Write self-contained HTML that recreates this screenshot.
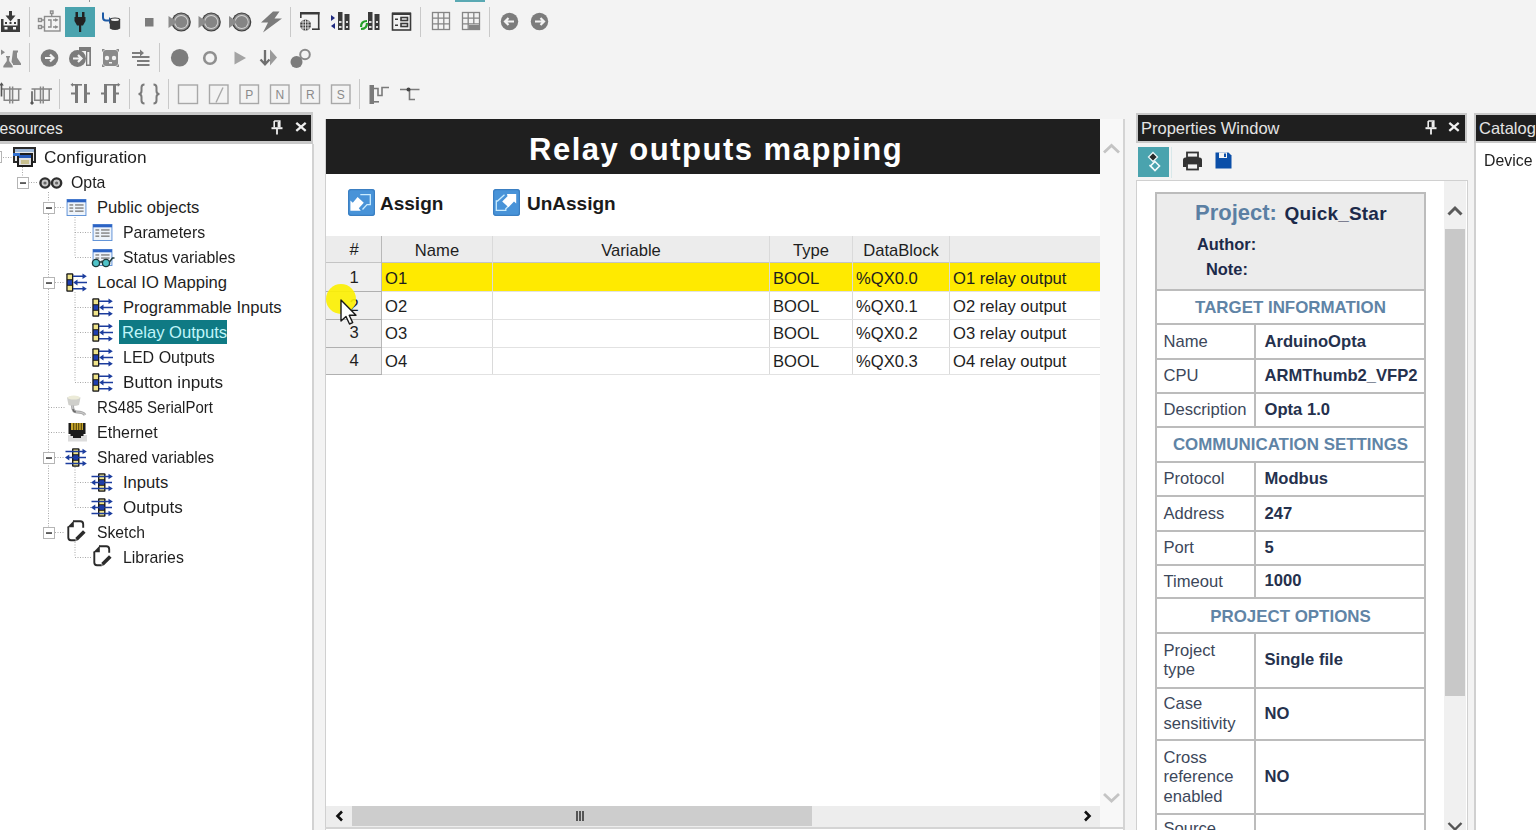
<!DOCTYPE html>
<html><head><meta charset="utf-8">
<style>
*{margin:0;padding:0;box-sizing:border-box}
html,body{width:1536px;height:830px;overflow:hidden;background:#f3f3f3;font-family:"Liberation Sans",sans-serif;color:#1e1e1e;position:relative}
.a{position:absolute}
.hdr{position:absolute;background:#1f1f1f;color:#e4e4e4;border:2px solid #c9c9c9;font-size:16.5px;line-height:22px;white-space:nowrap;overflow:hidden}
.tree{font-size:16.6px;color:#1e1e1e;white-space:nowrap}
.ti{position:absolute;height:22px;line-height:22px}
.ic{position:absolute}
table{border-collapse:collapse}
</style></head><body>

<!-- top toolbar -->
<svg class="a" style="left:0;top:0" width="600" height="112" viewBox="0 0 600 112">
<!-- top teal slivers and small marks -->
<rect x="455" y="0" width="30" height="2" fill="#5aa9b3"/>
<rect x="669" y="0" width="30" height="2" fill="#5aa9b3"/>
<rect x="89" y="0" width="1" height="2" fill="#999"/>
<!-- separators -->
<g fill="#c9c9c9">
<rect x="29" y="7" width="1" height="30"/><rect x="129" y="7" width="1" height="30"/><rect x="290" y="7" width="1" height="30"/><rect x="420" y="7" width="1" height="30"/><rect x="489" y="7" width="1" height="30"/>
<rect x="29" y="43" width="1" height="29"/><rect x="159" y="43" width="1" height="29"/>
<rect x="59" y="79" width="1" height="30"/><rect x="129" y="79" width="1" height="30"/><rect x="168" y="79" width="1" height="30"/><rect x="359" y="79" width="1" height="30"/>
</g>
<!-- ROW 1 -->
<!-- deploy -->
<g fill="#3b3b3b">
<rect x="9" y="11" width="3" height="8"/><path d="M5.5 15.5 L15.5 15.5 L10.5 21.5 Z"/>
<path d="M1 19 h2.5 v6.5 h14 v-6.5 h2.5 v13 h-19 z"/>
<rect x="5" y="22" width="2" height="2"/><rect x="9.5" y="22" width="2" height="2"/><rect x="14" y="22" width="2" height="2"/>
</g>
<rect x="4.5" y="27" width="3" height="2.5" fill="#f3f3f3"/><rect x="13" y="27" width="3" height="2.5" fill="#f3f3f3"/>
<!-- circuit -->
<g fill="none" stroke="#8c8c8c" stroke-width="1.4">
<rect x="44.5" y="16.5" width="15.5" height="14.5"/><rect x="38.5" y="18.5" width="3" height="3"/><rect x="38.5" y="25.5" width="3" height="3"/>
<rect x="50.5" y="11" width="2.5" height="2.5"/><path d="M51.7 13.5 v3 M41.5 20 h3 M41.5 27 h3 M48 20 h3 v7 h-3 M53 20 h5 M53 27 h5 M55 19 l2 1 l-2 1 M55 26 l2 1 l-2 1"/>
</g>
<!-- teal plug -->
<rect x="65" y="7" width="30" height="30" fill="#4aa3ae"/>
<g fill="#222">
<rect x="75.5" y="12" width="2.5" height="5"/><rect x="82" y="12" width="2.5" height="5"/>
<path d="M74.5 17 h11 v4 l-2.5 4.5 h-6 l-2.5 -4.5 z"/><rect x="79" y="25" width="2.2" height="7"/>
</g>
<!-- blue arrow + db -->
<path d="M103 12.5 v5 q0 3 3 3 h4" fill="none" stroke="#1d5aa6" stroke-width="2"/><path d="M109 17 l3.5 3.5 l-3.5 3.5 z" fill="#1d5aa6"/>
<g fill="#3a3a3a"><ellipse cx="115" cy="19.5" rx="5.2" ry="2"/><path d="M109.8 19.5 v9 q5.2 3 10.4 0 v-9 q-5.2 3 -10.4 0z"/></g>
<ellipse cx="115" cy="19.8" rx="4" ry="1.2" fill="#f3f3f3"/>
<!-- stop -->
<rect x="145" y="18" width="8.5" height="8.5" fill="#7c7c7c"/>
<!-- 3 circles -->
<g>
<circle cx="181.2" cy="22" r="9.6" fill="#3f3f3f"/><circle cx="181.2" cy="22" r="8.4" fill="#8c8c8c"/><circle cx="181.2" cy="22" r="7" fill="#d4d4d4"/><circle cx="181.2" cy="22" r="6.1" fill="#858585"/><path d="M168.5 16 l8.5 6 l-8.5 6z" fill="#8c8c8c"/>
<circle cx="211.2" cy="22" r="9.6" fill="#3f3f3f"/><circle cx="211.2" cy="22" r="8.4" fill="#8c8c8c"/><circle cx="211.2" cy="22" r="7" fill="#d4d4d4"/><circle cx="211.2" cy="22" r="6.1" fill="#858585"/><path d="M198.5 16 l8.5 6 l-8.5 6z" fill="#8c8c8c"/>
<circle cx="241.7" cy="22" r="9.6" fill="#3f3f3f"/><circle cx="241.7" cy="22" r="8.4" fill="#8c8c8c"/><circle cx="241.7" cy="22" r="7" fill="#d4d4d4"/><circle cx="241.7" cy="22" r="6.1" fill="#858585"/><path d="M229.0 16 l8.5 6 l-8.5 6z" fill="#8c8c8c"/>
</g>
<!-- lightning -->
<path d="M273 11.5 L279.5 11.5 L274.5 18.5 L282 18.5 L263 32.5 L268 22.5 L261 22.5 Z" fill="#7b7b7b"/>
<!-- globe window -->
<g fill="#3a3a3a"><rect x="300" y="12" width="19.5" height="2.5"/><rect x="300" y="12" width="1.6" height="6"/><rect x="317.9" y="12" width="1.6" height="18"/><rect x="312" y="28.4" width="7.5" height="1.6"/><circle cx="305.5" cy="25" r="5.5"/></g>
<path d="M300 25 h11 M305.5 19.5 v11 M301 22 h9 M301 28 h9 M303 20 v10 M308 20 v10" stroke="#f3f3f3" stroke-width="0.8"/>
<!-- books 1 -->
<g fill="#1f2a80"><path d="M331 15 l4 3 l-4 3z"/><path d="M335 23 l-4 3 l4 3z"/></g>
<g fill="#3a3a3a"><rect x="338" y="12" width="4.5" height="18"/><rect x="344.5" y="14" width="5" height="16"/></g>
<g fill="#ddd"><rect x="339" y="21" width="2.5" height="2"/><rect x="339" y="26" width="2.5" height="2"/><rect x="346" y="21" width="2" height="2"/><rect x="346" y="26" width="2" height="2"/></g>
<!-- books 2 green -->
<g fill="#3a3a3a"><rect x="368" y="12" width="4.5" height="18"/><rect x="374.5" y="14" width="5" height="16"/></g>
<g fill="#ddd"><rect x="369" y="21" width="2.5" height="2"/><rect x="369" y="26" width="2.5" height="2"/><rect x="376" y="21" width="2" height="2"/><rect x="376" y="26" width="2" height="2"/></g>
<path d="M361 27 q0 -6 6 -6 M367 23 q0 6 -6 6" fill="none" stroke="#25a02a" stroke-width="2.2"/>
<!-- list window -->
<g fill="none" stroke="#3a3a3a" stroke-width="1.6"><rect x="392.5" y="13.5" width="18" height="16.5"/><rect x="401" y="17.5" width="6.5" height="3"/><rect x="401" y="23.5" width="6.5" height="3"/></g>
<rect x="392" y="12.5" width="19" height="2.5" fill="#3a3a3a"/><rect x="395" y="18.5" width="3" height="1.5" fill="#3a3a3a"/><rect x="395" y="24.5" width="3" height="1.5" fill="#3a3a3a"/>
<!-- grids -->
<g fill="none" stroke="#858585" stroke-width="1.3"><rect x="432.5" y="12.5" width="17" height="17"/><path d="M438.2 12.5 v17 M443.8 12.5 v17 M432.5 18.2 h17 M432.5 23.8 h17"/>
<rect x="462.5" y="12.5" width="17" height="17"/><path d="M468.2 12.5 v11.3 M473.8 12.5 v11.3 M462.5 18.2 h17 M462.5 23.8 h17 M468.2 23.8 v5.7"/></g>
<rect x="469" y="25" width="10.5" height="4.5" fill="#858585"/>
<!-- circle arrows -->
<circle cx="509.5" cy="21.5" r="8.7" fill="#7c7c7c"/><path d="M514 21.5 h-8 M508.5 18 l-3.5 3.5 l3.5 3.5" fill="none" stroke="#f3f3f3" stroke-width="2.2"/>
<circle cx="539.5" cy="21.5" r="8.7" fill="#7c7c7c"/><path d="M535 21.5 h8 M540.5 18 l3.5 3.5 l-3.5 3.5" fill="none" stroke="#f3f3f3" stroke-width="2.2"/>

<!-- ROW 2 -->
<!-- flask -->
<g fill="#8a8a8a"><path d="M1 49.5 l4 2.8 l-4 2.8z"/><path d="M13 50.5 h5 v2 h-1 v5 l4 6 v1.5 h-8 v-1 l-1.5 -2 z"/><path d="M6 56 h4 v1.5 h-0.8 v3.5 l3.5 5 v1.5 h-9.4 v-1.5 l3.5 -5 v-3.5 h-0.8z"/></g>
<!-- circle arrow -->
<circle cx="49.5" cy="58" r="8.8" fill="#7c7c7c"/><path d="M45 58 h8 M50 54.5 l3.5 3.5 l-3.5 3.5" fill="none" stroke="#f3f3f3" stroke-width="2.2"/>
<!-- circle arrow with bar -->
<circle cx="77.5" cy="58.5" r="8.5" fill="#7c7c7c"/><path d="M73 58.5 h8 M78 55 l3.5 3.5 l-3.5 3.5" fill="none" stroke="#f3f3f3" stroke-width="2.2"/>
<path d="M79 47 h12 v19 h-5 v-15 h-7z" fill="#7c7c7c"/><rect x="87.3" y="52" width="2" height="12.5" fill="#f3f3f3"/>
<!-- bug -->
<g fill="#8a8a8a"><rect x="103" y="50" width="15" height="16" rx="3"/><path d="M102 49 l3 0 l-3 3z M119 49 l-3 0 l3 3z M102 67 l3 0 l-3 -3z M119 67 l-3 0 l3 -3z"/></g>
<circle cx="107" cy="58" r="2.2" fill="#f3f3f3"/><circle cx="114" cy="58" r="2.2" fill="#f3f3f3"/><rect x="109" y="62" width="3" height="1.5" fill="#f3f3f3"/>
<!-- arrow lines -->
<g fill="#7c7c7c"><rect x="137" y="60" width="12.5" height="2"/><rect x="137" y="64" width="12.5" height="2"/><rect x="132" y="56" width="17.5" height="2"/><path d="M132 52 h8 v-2.5 l4 3.5 l-4 3.5 v-2.5 h-8z"/></g>
<!-- filled circle -->
<circle cx="179.7" cy="57.8" r="8.8" fill="#7c7c7c"/>
<!-- hollow circle -->
<circle cx="210" cy="58" r="5.8" fill="none" stroke="#8f8f8f" stroke-width="2.6"/>
<!-- play -->
<path d="M234.5 51.5 l11.5 6.5 l-11.5 6.5z" fill="#a3a3a3"/>
<!-- step -->
<path d="M270 49.5 l7 8 l-7 8z" fill="#9a9a9a"/><path d="M265 50 v14 M260.5 59.5 l4.5 4.8 l4.5 -4.8" fill="none" stroke="#6f6f6f" stroke-width="2.3"/>
<!-- dot ring -->
<circle cx="305" cy="54.5" r="4.8" fill="none" stroke="#8a8a8a" stroke-width="2"/><circle cx="296.5" cy="62" r="6" fill="#7c7c7c"/>

<!-- ROW 3 -->
<g fill="none" stroke="#858585" stroke-width="1.5">
<path d="M2 89.1 h19.5 M4.2 89.1 v11.2 h14.5 v-11.2 M9.8 86.4 v17 M12.6 86.4 v17"/>
<path d="M31.5 89.1 h20.5 M34.7 89.1 v11.2 h14.5 v-11.2 M40.5 86.4 v17 M43.2 86.4 v17"/>
</g>
<path d="M1.5 96.5 v-12" stroke="#555" stroke-width="1.6"/><path d="M-0.8 85.5 l2.3 -3.2 l2.3 3.2z" fill="#555"/>
<path d="M32 91.3 v11" stroke="#666" stroke-width="1.7"/><path d="M32 101 l2 2 l-2 2 l-2 -2z" fill="#555"/>
<!-- -|T|- -->
<g fill="#7a7a7a"><rect x="75" y="84" width="3" height="19"/><rect x="84" y="84" width="3" height="19"/><rect x="71" y="92.5" width="4" height="2"/><rect x="87" y="92.5" width="3" height="2"/><rect x="72" y="84" width="10" height="1.6"/><path d="M70.5 84.8 l2.5 -2 v4z"/>
<rect x="104" y="84" width="3" height="19"/><rect x="113" y="84" width="3" height="19"/><rect x="101" y="92.5" width="3" height="2"/><rect x="116" y="92.5" width="3" height="2"/><rect x="106" y="84" width="12" height="1.6"/><path d="M120.3 84.8 l-2.5 -2 v4z"/></g>
<!-- {} -->
<path d="M144.5 84.5 q-3 0 -3 3 v3.5 q0 3 -3 3 q3 0 3 3 v3.5 q0 3 3 3 M153.5 84.5 q3 0 3 3 v3.5 q0 3 3 3 q-3 0 -3 3 v3.5 q0 3 -3 3" fill="none" stroke="#7a7a7a" stroke-width="2"/>
<!-- boxes -->
<g fill="none" stroke="#a8a8a8" stroke-width="1.4">
<rect x="178.5" y="85" width="19" height="18.5"/><rect x="209.5" y="85" width="18.5" height="18.5"/><rect x="240" y="85" width="18.5" height="18.5"/><rect x="270.5" y="85" width="18.5" height="18.5"/><rect x="301" y="85" width="18.5" height="18.5"/><rect x="331.5" y="85" width="18.5" height="18.5"/>
<path d="M223 87.5 l-7 15"/>
</g>
<g fill="#8a8a8a" font-family="Liberation Sans" font-size="12" text-anchor="middle"><text x="249.3" y="99">P</text><text x="279.8" y="99">N</text><text x="310.3" y="99">R</text><text x="340.8" y="99">S</text></g>
<!-- last two -->
<rect x="369.5" y="85" width="4.5" height="19" fill="#7a7a7a"/><path d="M374 88.5 h4 v7 h4 v-8 h7" fill="none" stroke="#7a7a7a" stroke-width="1.6"/><rect x="374" y="101" width="5" height="1.6" fill="#7a7a7a"/>
<path d="M400 89.5 h19.5 M409.5 89.5 v10 h5.5" fill="none" stroke="#7a7a7a" stroke-width="1.6"/><circle cx="408.5" cy="89.5" r="2" fill="#444"/>
</svg>


<!-- Resources panel -->
<div class="hdr" style="left:-2px;top:112px;width:315px;height:32px;border-top-width:3px;border-bottom-width:3px">
  <span class="a" style="left:-0.5px;top:3px;font-size:15.6px;color:#e8e8e8">esources</span>
</div>
<div class="a" style="left:0;top:144px;width:314px;height:686px;background:#fff;border-right:2px solid #d2d2d2"></div>
<svg width="0" height="0" style="position:absolute">
<defs>
<symbol id="io" viewBox="0 0 21 19">
 <rect x="0.3" y="0.3" width="7" height="18.4" rx="1" fill="#1a1a1a"/>
 <rect x="1.6" y="1.6" width="4.4" height="4.6" fill="#efe48a"/><rect x="1.6" y="7.2" width="4.4" height="4.6" fill="#1f3fb0"/><rect x="1.6" y="12.8" width="4.4" height="4.6" fill="#efe48a"/>
 <g fill="none" stroke="#1c3d9e" stroke-width="1.6"><path d="M7 3.3 h11 M9 9.5 h12 M7 15.7 h11"/></g>
 <g fill="#1c3d9e"><path d="M16.5 0.5 l4.3 2.8 l-4.3 2.8z"/><path d="M11.5 6.5 l-4.3 3 l4.3 3z"/><path d="M16.5 12.9 l4.3 2.8 l-4.3 2.8z"/></g>
</symbol>
<symbol id="sv" viewBox="0 0 22 19">
 <rect x="7" y="0.3" width="7.5" height="18.4" rx="1" fill="#1a1a1a"/>
 <rect x="8.4" y="1.6" width="4.7" height="4.6" fill="#efe48a"/><rect x="8.4" y="7.2" width="4.7" height="4.6" fill="#1f3fb0"/><rect x="8.4" y="12.8" width="4.7" height="4.6" fill="#efe48a"/>
 <g fill="none" stroke="#1c3d9e" stroke-width="1.6"><path d="M0.5 3.5 h19 M2 9.5 h19 M0.5 15.5 h19"/></g>
 <g fill="#1c3d9e"><path d="M17.5 0.7 l4.3 2.8 l-4.3 2.8z"/><path d="M4.3 6.5 l-4.3 3 l4.3 3z"/><path d="M17.5 12.7 l4.3 2.8 l-4.3 2.8z"/></g>
</symbol>
<symbol id="lst" viewBox="0 0 21 18">
 <rect x="0.5" y="0.5" width="20" height="17" fill="#eef4fb" stroke="#5b8fd6" stroke-width="1"/>
 <rect x="0.5" y="0.5" width="20" height="3" fill="#2c63c4"/>
 <g fill="#8a8a8a"><rect x="3" y="5.5" width="4" height="1.6"/><rect x="3" y="8.8" width="4" height="1.6"/><rect x="3" y="12.1" width="4" height="1.6"/><rect x="9" y="5.5" width="9" height="1.6"/><rect x="9" y="8.8" width="9" height="1.6"/><rect x="9" y="12.1" width="9" height="1.6"/></g>
</symbol>
<symbol id="sk" viewBox="0 0 20 22">
 <path d="M6 1.3 H13.3 Q16.2 1.3 16.2 4.2 V7.8" fill="none" stroke="#2b2b2b" stroke-width="1.9"/>
 <path d="M1.3 6.5 V17.6 Q1.3 20.3 4 20.3 H8.6" fill="none" stroke="#2b2b2b" stroke-width="1.9"/>
 <path d="M0.4 7.3 L6.8 0.4 V7.3 Z" fill="#2b2b2b"/>
 <path d="M9.5 19.2 L17.3 11.4" stroke="#2b2b2b" stroke-width="3.6"/>
 <path d="M8.2 21.2 L9 18.6 L10.6 20.2 Z" fill="#555"/>
</symbol>
<symbol id="exp" viewBox="0 0 12 12">
 <rect x="0.5" y="0.5" width="11" height="11" fill="#fff" stroke="#b5b5b5"/>
 <rect x="3" y="5.3" width="6" height="1.5" fill="#333"/>
</symbol>
</defs>
</svg>
<!-- dotted lines -->
<svg class="a" style="left:0;top:144px" width="120" height="430" viewBox="0 144 120 430">
<g stroke="#a8a8a8" stroke-width="1" stroke-dasharray="1 1.5" fill="none">
 <path d="M3 157.5 h10"/>
 <path d="M22.5 167 v10"/><path d="M28.5 182.5 h10"/>
 <path d="M48.5 192 v10 M48.5 214 v63 M48.5 289 v163 M48.5 463 v64"/>
 <path d="M55 207.5 h10 M55 282.5 h10 M48.5 407.5 h17 M48.5 432.5 h17 M55 457.5 h10 M55 532.5 h10"/>
 <path d="M75 217 v40 M75 292 v90 M75 467 v40 M75 542 v15"/>
 <path d="M75 232.5 h16 M75 257.5 h16 M75 307.5 h16 M75 332.5 h16 M75 357.5 h16 M75 382.5 h16 M75 482.5 h16 M75 507.5 h16 M75 557.5 h16"/>
</g>
</svg>
<!-- expanders -->
<svg class="a" style="left:-10px;top:151px" width="12" height="12"><use href="#exp"/></svg>
<svg class="a" style="left:17px;top:177px" width="12" height="12"><use href="#exp"/></svg>
<svg class="a" style="left:43px;top:202px" width="12" height="12"><use href="#exp"/></svg>
<svg class="a" style="left:43px;top:277px" width="12" height="12"><use href="#exp"/></svg>
<svg class="a" style="left:43px;top:452px" width="12" height="12"><use href="#exp"/></svg>
<svg class="a" style="left:43px;top:527px" width="12" height="12"><use href="#exp"/></svg>
<!-- icons -->
<svg class="a" style="left:13px;top:147px" width="23" height="20" viewBox="0 0 23 20">
 <rect x="1" y="1" width="21" height="14" fill="#e8e8e8" stroke="#2a2a2a" stroke-width="2"/>
 <rect x="2" y="2" width="19" height="3" fill="#9fb8d8"/>
 <rect x="5" y="7" width="14" height="12" fill="#dedede" stroke="#1c1c1c" stroke-width="2"/>
 <rect x="6" y="8" width="12" height="3" fill="#2659b8"/>
 <rect x="8" y="13" width="8" height="4" fill="#c8c090"/>
 <rect x="0" y="6" width="7" height="3" fill="#2f6fd0"/>
</svg>
<svg class="a" style="left:39px;top:177px" width="24" height="12" viewBox="0 0 24 12">
 <circle cx="6" cy="6" r="4.6" fill="#c9c9c9" stroke="#2e2e2e" stroke-width="2.4"/>
 <circle cx="17.6" cy="6" r="4.6" fill="#c9c9c9" stroke="#2e2e2e" stroke-width="2.4"/>
 <circle cx="6" cy="6" r="1.6" fill="#666"/><circle cx="17.6" cy="6" r="1.6" fill="#666"/>
</svg>
<svg class="a" style="left:66px;top:199px" width="21" height="17"><use href="#lst"/></svg>
<svg class="a" style="left:92px;top:224px" width="21" height="17"><use href="#lst"/></svg>
<svg class="a" style="left:92px;top:249px" width="21" height="17"><use href="#lst"/></svg>
<svg class="a" style="left:91px;top:256px" width="24" height="12" viewBox="0 0 24 12">
 <circle cx="5" cy="7" r="3.6" fill="#4fc3c8" stroke="#1e3a3a" stroke-width="1.4"/>
 <circle cx="15" cy="7" r="3.6" fill="#4fc3c8" stroke="#1e3a3a" stroke-width="1.4"/>
 <path d="M8.6 6 h2.8 M18.5 6 l3 -4 h2" stroke="#1e3a3a" stroke-width="1.4" fill="none"/>
</svg>
<svg class="a" style="left:66px;top:273px" width="21" height="19"><use href="#io"/></svg>
<svg class="a" style="left:92px;top:298px" width="21" height="19"><use href="#io"/></svg>
<svg class="a" style="left:92px;top:323px" width="21" height="19"><use href="#io"/></svg>
<svg class="a" style="left:92px;top:348px" width="21" height="19"><use href="#io"/></svg>
<svg class="a" style="left:92px;top:373px" width="21" height="19"><use href="#io"/></svg>
<svg class="a" style="left:66px;top:395px" width="22" height="23" viewBox="0 0 22 23">
 <path d="M1 2.5 Q7.5 0 14.5 2.5 L13 10 Q7.5 12 2.5 10 Z" fill="#cfcfcb"/>
 <ellipse cx="7.8" cy="2.6" rx="6.3" ry="2" fill="#ecebd8"/>
 <path d="M6.5 10.5 Q6.5 17 11 17 Q17 17 19 20" fill="none" stroke="#a8a8a8" stroke-width="3"/>
 <path d="M6.5 10.5 Q6.5 17 11 17 Q17 17 19 20" fill="none" stroke="#c9c9c9" stroke-width="1.2"/>
 <path d="M6.8 14 q0.5 2.5 3 3" stroke="#666" stroke-width="1.3" fill="none"/>
</svg>
<svg class="a" style="left:68px;top:423px" width="20" height="19" viewBox="0 0 20 19">
 <rect x="0" y="12" width="19" height="6.5" fill="#dcdcdc"/>
 <path d="M0.5 0 H17.5 V11 H15.5 V13 H13 V15 H5 V13 H2.5 V11 H0.5 Z" fill="#1b1b1b"/>
 <rect x="3" y="0" width="12" height="7" fill="#c8a62a"/>
 <g fill="#3a3000"><rect x="5.3" y="0" width="0.9" height="7"/><rect x="7.8" y="0" width="0.9" height="7"/><rect x="10.3" y="0" width="0.9" height="7"/><rect x="12.8" y="0" width="0.9" height="7"/></g>
</svg>
<svg class="a" style="left:65px;top:448px" width="22" height="19"><use href="#sv"/></svg>
<svg class="a" style="left:91px;top:473px" width="22" height="19"><use href="#sv"/></svg>
<svg class="a" style="left:91px;top:498px" width="22" height="19"><use href="#sv"/></svg>
<svg class="a" style="left:67px;top:520px" width="20" height="22"><use href="#sk"/></svg>
<svg class="a" style="left:93px;top:545px" width="20" height="22"><use href="#sk"/></svg>
<!-- labels -->
<div class="tree">
<div class="ti" style="left:44px;top:147px;transform:scaleX(1.038);transform-origin:0 0">Configuration</div>
<div class="ti" style="left:71px;top:172px;transform:scaleX(0.957);transform-origin:0 0">Opta</div>
<div class="ti" style="left:97px;top:197px">Public objects</div>
<div class="ti" style="left:123px;top:222px;transform:scaleX(0.958);transform-origin:0 0">Parameters</div>
<div class="ti" style="left:123px;top:247px;transform:scaleX(0.953);transform-origin:0 0">Status variables</div>
<div class="ti" style="left:97px;top:272px">Local IO Mapping</div>
<div class="ti" style="left:123px;top:297px">Programmable Inputs</div>
<div class="a" style="left:119px;top:320px;width:108px;height:24px;background:#0f7a84"></div>
<div class="ti" style="left:122px;top:322px;color:#c0f6fa">Relay Outputs</div>
<div class="ti" style="left:123px;top:347px;transform:scaleX(0.966);transform-origin:0 0">LED Outputs</div>
<div class="ti" style="left:123px;top:372px;transform:scaleX(1.033);transform-origin:0 0">Button inputs</div>
<div class="ti" style="left:97px;top:397px;transform:scaleX(0.904);transform-origin:0 0">RS485 SerialPort</div>
<div class="ti" style="left:97px;top:422px;transform:scaleX(0.966);transform-origin:0 0">Ethernet</div>
<div class="ti" style="left:97px;top:447px;transform:scaleX(0.941);transform-origin:0 0">Shared variables</div>
<div class="ti" style="left:123px;top:472px">Inputs</div>
<div class="ti" style="left:123px;top:497px;transform:scaleX(1.03);transform-origin:0 0">Outputs</div>
<div class="ti" style="left:97px;top:522px;transform:scaleX(0.945);transform-origin:0 0">Sketch</div>
<div class="ti" style="left:123px;top:547px;transform:scaleX(0.956);transform-origin:0 0">Libraries</div>
</div>


<!-- Editor -->
<div class="a" style="left:325px;top:119px;width:800px;height:711px;background:#fff;border-left:1px solid #d0d0d0;border-right:2px solid #d4d4d4"></div>
<div class="a" style="left:326px;top:119px;width:774px;height:55px;background:#1f1f1f"></div><div class="a" style="left:529px;top:132px;color:#fff;font-weight:bold;font-size:31px;letter-spacing:1.5px;line-height:36px;white-space:nowrap">Relay outputs mapping</div>
<!-- editor toolbar -->
<svg class="a" style="left:348px;top:189px" width="27" height="27" viewBox="0 0 27 27">
 <rect x="0" y="0" width="27" height="27" rx="3" fill="#4893d8"/>
 <rect x="0.6" y="0.6" width="25.8" height="25.8" rx="2.6" fill="none" stroke="#3b7fc2" stroke-width="1.2"/>
 <path d="M12.3 5.6 H22.3 V15.6 H19 L14.5 20.5" fill="none" stroke="#c9ecff" stroke-width="1.3"/>
 <path d="M2.4 11.6 L4.8 13.8 L9.6 8 L15.8 13.7 L10.8 19.2 L12.8 21.8 H2.4 Z" fill="#fff"/>
</svg>
<div class="a" style="left:380px;top:193px;font-weight:bold;font-size:19px;line-height:22px;color:#1a1a1a">Assign</div>
<svg class="a" style="left:493px;top:189px" width="27" height="27" viewBox="0 0 27 27">
 <rect x="0" y="0" width="27" height="27" rx="3" fill="#4893d8"/>
 <rect x="0.6" y="0.6" width="25.8" height="25.8" rx="2.6" fill="none" stroke="#3b7fc2" stroke-width="1.2"/>
 <path d="M11.5 5.8 L4.5 12 H3.3 V21.3 H12.8 V19.8 L15.8 16.8" fill="none" stroke="#c9ecff" stroke-width="1.3"/>
 <path d="M14 5 H23.2 V14.6 L21 12.6 L15.5 18.3 L9.2 12.4 L14.5 7.2 Z" fill="#fff"/>
</svg>
<div class="a" style="left:527px;top:193px;font-weight:bold;font-size:19px;line-height:22px;color:#1a1a1a">UnAssign</div>

<!-- grid -->
<div class="a" style="left:326px;top:236px;width:774px;height:139px;font-size:16.6px;color:#1e1e1e">
 <!-- header -->
 <div class="a" style="left:0;top:0;width:774px;height:27px;background:#ececec;border-bottom:1px solid #c4c4c4"></div>
 <div class="a" style="left:0;top:27px;width:56px;height:112px;background:#efefef"></div>
 <div class="a" style="left:56px;top:27px;width:718px;height:28px;background:#ffea00"></div>
 <!-- vertical lines -->
 <div class="a" style="left:55px;top:0;width:1px;height:139px;background:#b8b8b8"></div>
 <div class="a" style="left:166px;top:0;width:1px;height:139px;background:#dadada"></div>
 <div class="a" style="left:443px;top:0;width:1px;height:139px;background:#dadada"></div>
 <div class="a" style="left:526px;top:0;width:1px;height:139px;background:#dadada"></div>
 <div class="a" style="left:623px;top:0;width:1px;height:139px;background:#dadada"></div>
 <!-- horizontal lines -->
 <div class="a" style="left:0;top:55px;width:56px;height:1px;background:#b0b0b0"></div>
 <div class="a" style="left:0;top:83px;width:56px;height:1px;background:#b0b0b0"></div>
 <div class="a" style="left:0;top:111px;width:56px;height:1px;background:#b0b0b0"></div>
 <div class="a" style="left:0;top:138px;width:56px;height:1px;background:#b0b0b0"></div>
 <div class="a" style="left:56px;top:55px;width:718px;height:1px;background:#e2e2e2"></div>
 <div class="a" style="left:56px;top:83px;width:718px;height:1px;background:#e2e2e2"></div>
 <div class="a" style="left:56px;top:111px;width:718px;height:1px;background:#e2e2e2"></div>
 <div class="a" style="left:56px;top:138px;width:718px;height:1px;background:#e2e2e2"></div>
 <!-- header text -->
 <div class="a" style="left:0;top:3px;width:56px;text-align:center;line-height:22px">#</div>
 <div class="a" style="left:56px;top:4px;width:110px;text-align:center;line-height:22px">Name</div>
 <div class="a" style="left:167px;top:4px;width:276px;text-align:center;line-height:22px">Variable</div>
 <div class="a" style="left:444px;top:4px;width:82px;text-align:center;line-height:22px">Type</div>
 <div class="a" style="left:527px;top:4px;width:96px;text-align:center;line-height:22px">DataBlock</div>
 <!-- rows -->
 <div class="a" style="left:0;top:31px;width:56px;text-align:center;line-height:22px">1</div>
 <div class="a" style="left:0;top:59px;width:56px;text-align:center;line-height:22px">2</div>
 <div class="a" style="left:0;top:86px;width:56px;text-align:center;line-height:22px">3</div>
 <div class="a" style="left:0;top:114px;width:56px;text-align:center;line-height:22px">4</div>
 <div class="a" style="left:59px;top:32px;line-height:22px">O1</div>
 <div class="a" style="left:59px;top:60px;line-height:22px">O2</div>
 <div class="a" style="left:59px;top:87px;line-height:22px">O3</div>
 <div class="a" style="left:59px;top:115px;line-height:22px">O4</div>
 <div class="a" style="left:447px;top:32px;line-height:22px">BOOL</div>
 <div class="a" style="left:447px;top:60px;line-height:22px">BOOL</div>
 <div class="a" style="left:447px;top:87px;line-height:22px">BOOL</div>
 <div class="a" style="left:447px;top:115px;line-height:22px">BOOL</div>
 <div class="a" style="left:530px;top:32px;line-height:22px">%QX0.0</div>
 <div class="a" style="left:530px;top:60px;line-height:22px">%QX0.1</div>
 <div class="a" style="left:530px;top:87px;line-height:22px">%QX0.2</div>
 <div class="a" style="left:530px;top:115px;line-height:22px">%QX0.3</div>
 <div class="a" style="left:627px;top:32px;line-height:22px">O1 relay output</div>
 <div class="a" style="left:627px;top:60px;line-height:22px">O2 relay output</div>
 <div class="a" style="left:627px;top:87px;line-height:22px">O3 relay output</div>
 <div class="a" style="left:627px;top:115px;line-height:22px">O4 relay output</div>
</div>

<!-- vertical scroll arrows -->
<div class="a" style="left:1100px;top:119px;width:23px;height:709px;background:#f8f8f8"></div>
<svg class="a" style="left:1101px;top:141px" width="21" height="16" viewBox="0 0 21 16"><path d="M3 11.5 l7.5 -7 l7.5 7" fill="none" stroke="#c4c4c4" stroke-width="2.8"/></svg>
<svg class="a" style="left:1101px;top:790px" width="21" height="16" viewBox="0 0 21 16"><path d="M3 4 l7.5 7 l7.5 -7" fill="none" stroke="#c4c4c4" stroke-width="2.8"/></svg>

<!-- horizontal scrollbar -->
<div class="a" style="left:326px;top:806px;width:774px;height:21px;background:#ededed"></div>
<div class="a" style="left:352px;top:806px;width:460px;height:20px;background:#cdcdcd"></div>
<svg class="a" style="left:332px;top:808px" width="16" height="16" viewBox="0 0 16 16"><path d="M10 3.5 l-4.5 4.5 l4.5 4.5" fill="none" stroke="#111" stroke-width="2.6"/></svg>
<svg class="a" style="left:1079px;top:808px" width="16" height="16" viewBox="0 0 16 16"><path d="M6 3.5 l4.5 4.5 l-4.5 4.5" fill="none" stroke="#111" stroke-width="2.6"/></svg>
<div class="a" style="left:576px;top:811px;width:2px;height:10px;background:#555;box-shadow:3px 0 0 #555,6px 0 0 #555"></div>
<div class="a" style="left:325px;top:827px;width:799px;height:2px;background:#d4d4d4"></div>

<!-- cursor -->
<div class="a" style="left:326px;top:284px;width:30px;height:30px;border-radius:50%;background:#fdf100;opacity:0.9;filter:blur(0.7px)"></div>
<svg class="a" style="left:340px;top:299px" width="20" height="28" viewBox="0 0 20 28">
 <path d="M1 1 v21 l5 -4.5 l3.5 7.5 l3.2 -1.4 l-3.5 -7.3 h6.8 z" fill="#fff" stroke="#1a1a1a" stroke-width="1.4" stroke-linejoin="round"/>
</svg>


<!-- Properties -->
<div class="hdr" style="left:1136px;top:113px;width:331px;height:30px">
  <span class="a" style="left:3px;top:2px">Properties Window</span>
</div>
<div class="a" style="left:1136px;top:180px;width:332px;height:650px;background:#fff;border:1px solid #d0d0d0"></div>
<!-- properties toolbar -->
<div class="a" style="left:1138px;top:147px;width:31px;height:30px;background:#4aa3ae"></div>
<svg class="a" style="left:1143px;top:151px" width="20" height="22" viewBox="0 0 20 22">
 <path d="M10 1.5 l4.5 4.5 l-4.5 4.5 l-4.5 -4.5z" fill="#2a2a2a" stroke="#e8f6f8" stroke-width="1.3"/>
 <path d="M12 10.5 l4.5 4.5 l-4.5 4.5 l-4.5 -4.5z" fill="none" stroke="#f2fbfc" stroke-width="1.6"/>
 <path d="M6.5 14 l3.5 3.5" stroke="#f2fbfc" stroke-width="1.4"/>
</svg>
<div class="a" style="left:1171px;top:147px;width:1px;height:31px;background:#d8e8ea"></div>
<svg class="a" style="left:1182px;top:151px" width="21" height="20" viewBox="0 0 21 20">
 <rect x="5" y="1.5" width="11" height="5" fill="none" stroke="#333" stroke-width="1.8"/>
 <path d="M1 9 q0 -2.5 2.5 -2.5 h14 q2.5 0 2.5 2.5 v7 h-3.5 v-3.5 h-12 v3.5 h-3.5z" fill="#333"/>
 <rect x="5" y="12.5" width="11" height="6" fill="none" stroke="#333" stroke-width="1.8"/>
</svg>
<svg class="a" style="left:1215px;top:152px" width="17" height="17" viewBox="0 0 17 17">
 <path d="M0.5 0.5 h13 l3 3 v13 h-16z" fill="#0b4fa8"/>
 <rect x="4" y="0.5" width="8" height="5.5" fill="#f3f3f3"/>
 <rect x="9" y="1.5" width="2" height="3.5" fill="#0b4fa8"/>
</svg>

<!-- content box -->
<div class="a" style="left:1137px;top:181px;width:330px;height:649px;background:#fff"></div>
<!-- scrollbar -->
<div class="a" style="left:1444px;top:181px;width:22px;height:649px;background:#f0f0f0"></div>
<div class="a" style="left:1445px;top:229px;width:20px;height:467px;background:#c8c8c8"></div>
<svg class="a" style="left:1445px;top:203px" width="20" height="16" viewBox="0 0 20 16"><path d="M3.5 11.5 l6.5 -6.5 l6.5 6.5" fill="none" stroke="#5a5a5a" stroke-width="3"/></svg>
<svg class="a" style="left:1445px;top:819px" width="20" height="12" viewBox="0 0 20 12"><path d="M3.5 4 l6.5 6.5 l6.5 -6.5" fill="none" stroke="#555" stroke-width="2.4"/></svg>


<!-- html table -->
<div class="a" style="left:1155px;top:192px;width:271px;height:98px;background:#ececec"></div>
<div class="a" style="left:1195px;top:200px;white-space:nowrap;line-height:26px"><span style="color:#5b7fa3;font-weight:bold;font-size:22px">Project:</span><span style="color:#1c2a4a;font-weight:bold;font-size:19px;letter-spacing:0.2px;margin-left:2px"> Quick_Star</span></div>
<div class="a" style="left:1197px;top:233px;font-weight:bold;color:#1c2a4a;font-size:16.4px;line-height:22px">Author:</div>
<div class="a" style="left:1206px;top:258px;font-weight:bold;color:#1c2a4a;font-size:16.4px;line-height:22px">Note:</div>
<div class="a" style="left:1155px;top:192px;width:2px;height:640px;background:#bcbcbc"></div>
<div class="a" style="left:1424px;top:192px;width:2px;height:640px;background:#bcbcbc"></div>
<div class="a" style="left:1155px;top:192px;width:271px;height:2px;background:#bcbcbc"></div>
<div class="a" style="left:1155px;top:289px;width:271px;height:2px;background:#bcbcbc"></div>
<div class="a" style="left:1155px;top:323px;width:271px;height:2px;background:#bcbcbc"></div>
<div class="a" style="left:1155px;top:358px;width:271px;height:2px;background:#bcbcbc"></div>
<div class="a" style="left:1155px;top:391.5px;width:271px;height:2px;background:#bcbcbc"></div>
<div class="a" style="left:1155px;top:426px;width:271px;height:2px;background:#bcbcbc"></div>
<div class="a" style="left:1155px;top:460.5px;width:271px;height:2px;background:#bcbcbc"></div>
<div class="a" style="left:1155px;top:495px;width:271px;height:2px;background:#bcbcbc"></div>
<div class="a" style="left:1155px;top:530px;width:271px;height:2px;background:#bcbcbc"></div>
<div class="a" style="left:1155px;top:563.5px;width:271px;height:2px;background:#bcbcbc"></div>
<div class="a" style="left:1155px;top:597px;width:271px;height:2px;background:#bcbcbc"></div>
<div class="a" style="left:1155px;top:632px;width:271px;height:2px;background:#bcbcbc"></div>
<div class="a" style="left:1155px;top:686.5px;width:271px;height:2px;background:#bcbcbc"></div>
<div class="a" style="left:1155px;top:739px;width:271px;height:2px;background:#bcbcbc"></div>
<div class="a" style="left:1155px;top:812.5px;width:271px;height:2px;background:#bcbcbc"></div>
<div class="a" style="left:1155px;top:290px;width:271px;height:34px;line-height:34px;text-align:center;color:#5f84a6;font-weight:bold;font-size:16.9px;padding-top:1px">TARGET INFORMATION</div>
<div class="a" style="left:1254px;top:324px;width:2px;height:35px;background:#bcbcbc"></div>
<div class="a" style="left:1163.5px;top:331.8px;line-height:19.5px;color:#3c475a;font-size:16.6px">Name</div>
<div class="a" style="left:1264.5px;top:330.5px;line-height:22px;color:#25314d;font-weight:bold;font-size:16.6px">ArduinoOpta</div>
<div class="a" style="left:1254px;top:359px;width:2px;height:33.5px;background:#bcbcbc"></div>
<div class="a" style="left:1163.5px;top:366.0px;line-height:19.5px;color:#3c475a;font-size:16.6px">CPU</div>
<div class="a" style="left:1264.5px;top:364.8px;line-height:22px;color:#25314d;font-weight:bold;font-size:16.6px">ARMThumb2_VFP2</div>
<div class="a" style="left:1254px;top:392.5px;width:2px;height:34.5px;background:#bcbcbc"></div>
<div class="a" style="left:1163.5px;top:400.0px;line-height:19.5px;color:#3c475a;font-size:16.6px">Description</div>
<div class="a" style="left:1264.5px;top:398.8px;line-height:22px;color:#25314d;font-weight:bold;font-size:16.6px">Opta 1.0</div>
<div class="a" style="left:1155px;top:427px;width:271px;height:34.5px;line-height:34.5px;text-align:center;color:#5f84a6;font-weight:bold;font-size:16.9px;padding-top:1px">COMMUNICATION SETTINGS</div>
<div class="a" style="left:1254px;top:461.5px;width:2px;height:34.5px;background:#bcbcbc"></div>
<div class="a" style="left:1163.5px;top:469.0px;line-height:19.5px;color:#3c475a;font-size:16.6px">Protocol</div>
<div class="a" style="left:1264.5px;top:467.8px;line-height:22px;color:#25314d;font-weight:bold;font-size:16.6px">Modbus</div>
<div class="a" style="left:1254px;top:496px;width:2px;height:35px;background:#bcbcbc"></div>
<div class="a" style="left:1163.5px;top:503.8px;line-height:19.5px;color:#3c475a;font-size:16.6px">Address</div>
<div class="a" style="left:1264.5px;top:502.5px;line-height:22px;color:#25314d;font-weight:bold;font-size:16.6px">247</div>
<div class="a" style="left:1254px;top:531px;width:2px;height:33.5px;background:#bcbcbc"></div>
<div class="a" style="left:1163.5px;top:538.0px;line-height:19.5px;color:#3c475a;font-size:16.6px">Port</div>
<div class="a" style="left:1264.5px;top:536.8px;line-height:22px;color:#25314d;font-weight:bold;font-size:16.6px">5</div>
<div class="a" style="left:1254px;top:564.5px;width:2px;height:33.5px;background:#bcbcbc"></div>
<div class="a" style="left:1163.5px;top:571.5px;line-height:19.5px;color:#3c475a;font-size:16.6px">Timeout</div>
<div class="a" style="left:1264.5px;top:570.2px;line-height:22px;color:#25314d;font-weight:bold;font-size:16.6px">1000</div>
<div class="a" style="left:1155px;top:598px;width:271px;height:35px;line-height:35px;text-align:center;color:#5f84a6;font-weight:bold;font-size:16.9px;padding-top:1px">PROJECT OPTIONS</div>
<div class="a" style="left:1254px;top:633px;width:2px;height:54.5px;background:#bcbcbc"></div>
<div class="a" style="left:1163.5px;top:640.8px;line-height:19.5px;color:#3c475a;font-size:16.6px">Project<br>type</div>
<div class="a" style="left:1264.5px;top:649.2px;line-height:22px;color:#25314d;font-weight:bold;font-size:16.6px">Single file</div>
<div class="a" style="left:1254px;top:687.5px;width:2px;height:52.5px;background:#bcbcbc"></div>
<div class="a" style="left:1163.5px;top:694.2px;line-height:19.5px;color:#3c475a;font-size:16.6px">Case<br>sensitivity</div>
<div class="a" style="left:1264.5px;top:702.8px;line-height:22px;color:#25314d;font-weight:bold;font-size:16.6px">NO</div>
<div class="a" style="left:1254px;top:740px;width:2px;height:73.5px;background:#bcbcbc"></div>
<div class="a" style="left:1163.5px;top:747.5px;line-height:19.5px;color:#3c475a;font-size:16.6px">Cross<br>reference<br>enabled</div>
<div class="a" style="left:1264.5px;top:765.8px;line-height:22px;color:#25314d;font-weight:bold;font-size:16.6px">NO</div>
<div class="a" style="left:1254px;top:813.5px;width:2px;height:86.5px;background:#bcbcbc"></div>
<div class="a" style="left:1163.5px;top:819px;line-height:19.5px;color:#3c475a;font-size:16.6px">Source</div>

<svg class="a" style="left:271px;top:120px" width="12" height="15" viewBox="0 0 12 15"><path d="M3.2 1 h5.6 v6.5 M3.2 1 v6.5" fill="none" stroke="#eee" stroke-width="1.6"/><rect x="0.5" y="7.2" width="11" height="2" fill="#eee"/><rect x="5.1" y="9" width="1.8" height="5.5" fill="#eee"/><rect x="6.6" y="1.8" width="1.4" height="5.5" fill="#eee"/></svg><svg class="a" style="left:294.5px;top:121px" width="12" height="11" viewBox="0 0 12 11"><path d="M1.3 1.8 l9.4 8 M10.7 1.8 l-9.4 8" stroke="#f0f0f0" stroke-width="2.3"/></svg><svg class="a" style="left:1425px;top:120px" width="12" height="15" viewBox="0 0 12 15"><path d="M3.2 1 h5.6 v6.5 M3.2 1 v6.5" fill="none" stroke="#eee" stroke-width="1.6"/><rect x="0.5" y="7.2" width="11" height="2" fill="#eee"/><rect x="5.1" y="9" width="1.8" height="5.5" fill="#eee"/><rect x="6.6" y="1.8" width="1.4" height="5.5" fill="#eee"/></svg><svg class="a" style="left:1448px;top:121px" width="12" height="11" viewBox="0 0 12 11"><path d="M1.3 1.8 l9.4 8 M10.7 1.8 l-9.4 8" stroke="#f0f0f0" stroke-width="2.3"/></svg>
<!-- Catalog -->
<div class="hdr" style="left:1474px;top:113px;width:70px;height:30px">
  <span class="a" style="left:3px;top:2px">Catalog</span>
</div>
<div class="a" style="left:1474px;top:143px;width:70px;height:687px;background:#fff;border-left:2px solid #d0d0d0"></div>
<div class="a tree" style="left:1484px;top:151px;transform:scaleX(0.955);transform-origin:0 0">Device</div>

</body></html>
